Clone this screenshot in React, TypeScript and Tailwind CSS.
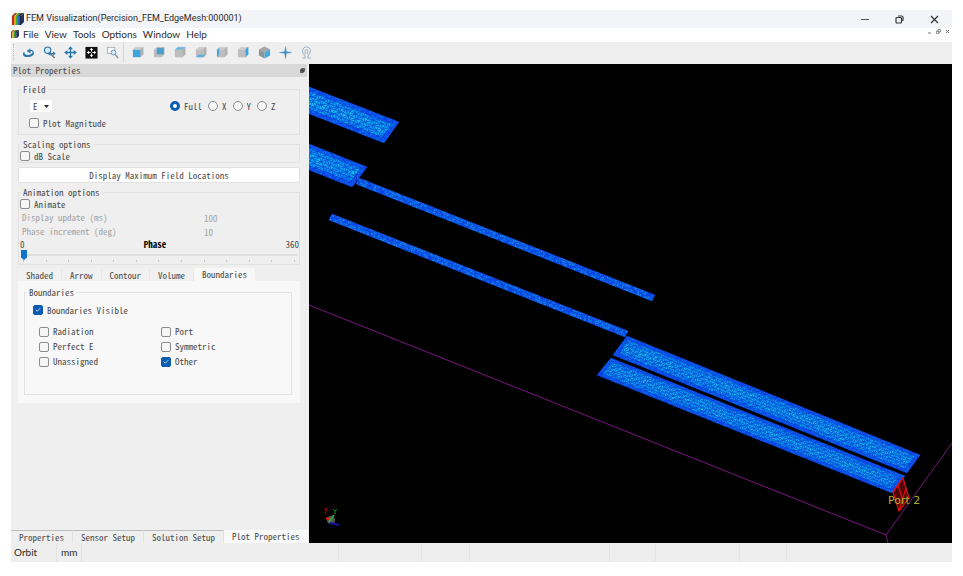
import { useState } from 'react';
import type { ReactNode } from 'react';
import { Check } from 'lucide-react';

type Point = [number, number];

interface Strip {
  // top-left, top-right, bottom-right, bottom-left
  corners: [Point, Point, Point, Point];
  cols: number;
  rows: number;
}

const STRIPS: Strip[] = [
  { corners: [[-15, 17], [90, 58], [75, 79], [-30, 38]], cols: 24, rows: 6 },
  { corners: [[-15, 74], [58, 103], [43, 123], [-30, 94]], cols: 17, rows: 6 },
  { corners: [[50, 114], [346, 231], [343, 237], [47, 120]], cols: 90, rows: 2 },
  { corners: [[23, 150], [319, 267], [316, 273], [20, 156]], cols: 90, rows: 2 },
  { corners: [[318, 272], [611, 391], [598, 409], [304, 291]], cols: 80, rows: 7 },
  { corners: [[302, 294], [596, 412], [583, 429], [288, 311]], cols: 80, rows: 7 },
];

const WIDE_SHADES = ['#0a6cf4', '#0a82f4', '#0a98f2', '#0caaf0', '#18bcec'];
const EDGE_SHADES = ['#1248f4', '#0f5cf4', '#0c6af6'];
const THIN_SHADES = ['#1248f4', '#0c6cf6', '#1a8af4'];

const MENUS = ['File', 'View', 'Tools', 'Options', 'Window', 'Help'];
const PLOT_TABS = ['Shaded', 'Arrow', 'Contour', 'Volume', 'Boundaries'];
const DOCK_TABS = ['Properties', 'Sensor Setup', 'Solution Setup', 'Plot Properties'];

function noise(seed: number) {
  const v = Math.sin(seed * 12.9898) * 43758.5453;
  return v - Math.floor(v);
}

function buildMesh({ corners, cols, rows }: Strip, seed: number) {
  const [tl, tr, br, bl] = corners;
  const at = (c: number, r: number): Point => {
    const inner = c > 0 && c < cols && r > 0 && r < rows;
    const id = seed * 5000 + r * 131 + c;
    const u = (c + (inner ? (noise(id) - 0.5) * 0.35 : 0)) / cols;
    const v = (r + (inner ? (noise(id + 77) - 0.5) * 0.3 : 0)) / rows;
    const x = (1 - v) * (tl[0] + (tr[0] - tl[0]) * u) + v * (bl[0] + (br[0] - bl[0]) * u);
    const y = (1 - v) * (tl[1] + (tr[1] - tl[1]) * u) + v * (bl[1] + (br[1] - bl[1]) * u);
    return [Number(x.toFixed(2)), Number(y.toFixed(2))];
  };
  const cells: { points: string; fill: string }[] = [];
  for (let r = 0; r < rows; r++) {
    for (let c = 0; c < cols; c++) {
      const a = at(c, r);
      const b = at(c + 1, r);
      const d = at(c + 1, r + 1);
      const e = at(c, r + 1);
      const tris = (r + c) % 2 ? [[a, b, d], [a, d, e]] : [[a, b, e], [b, d, e]];
      const edge = r === 0 || r === rows - 1 || c === 0 || c === cols - 1;
      tris.forEach((tri, i) => {
        const n = noise(seed + r * 313 + c * 17 + i * 7);
        const shades = rows === 2 ? THIN_SHADES : edge ? EDGE_SHADES : WIDE_SHADES;
        const near = edge ? 0.2 : 1 - Math.abs((r + 0.5) / rows - 0.5) * 2;
        const idx = Math.min(shades.length - 1, Math.floor(n * 2.4 + near * 3));
        cells.push({ points: tri.map((p) => p.join(',')).join(' '), fill: shades[idx] });
      });
    }
  }
  return cells;
}

const MESHES = STRIPS.map((s, i) => buildMesh(s, i + 1));

function AppLogo({ className }: { className: string }) {
  return (
    <svg className={className} viewBox="0 0 12 12">
      <path d="M1 3 4 0H12L9 3Z" fill="#3a3a3a" />
      <path d="M9 3 12 0V9L9 12Z" fill="#24315f" />
      <path d="M0 3H2V12H0Z" fill="#c0282a" />
      <path d="M2 3H4V12H2Z" fill="#e8a01c" />
      <path d="M4 3H6V12H4Z" fill="#3fa535" />
      <path d="M6 3H8V12H6Z" fill="#2a62c4" />
      <path d="M8 3H9V12H8Z" fill="#17203f" />
      <path d="M0 3 3 0H5L2 3Z" fill="#a3242a" />
      <path d="M2 3 5 0H7L4 3Z" fill="#e8c31c" />
      <path d="M4 3 7 0H9L6 3Z" fill="#3fa56a" />
    </svg>
  );
}

const GREY = '#bdbdbd';
const BLUE = '#3fa3dc';

function Cube({ front = GREY, top = '#cbcbcb', right = '#b0b0b0', children }: {
  front?: string;
  top?: string;
  right?: string;
  children?: ReactNode;
}) {
  return (
    <>
      <path d="M1 4 4 1.4H12L9 4Z" fill={top} stroke={top} strokeWidth=".6" strokeLinejoin="round" />
      <path d="M9 4 12 1.4V9L9 12Z" fill={right} stroke={right} strokeWidth=".6" strokeLinejoin="round" />
      <rect x="1" y="4" width="8" height="8" rx=".6" fill={front} />
      {children}
    </>
  );
}

const TOOLS: { name: string; art: ReactNode }[] = [
  {
    name: 'Rotate',
    art: (
      <g fill="none" stroke="#2b78ad" strokeLinecap="round">
        <path d="M2 7.200C.8 9.800 3.200 11.200 6.500 11c4-.2 6.300-2.400 5.500-4.600C11.400 4.900 9 4.600 7 5.400" strokeWidth="1.400" />
        <path d="M2.200 9C3.800 11.600 9.500 11.400 11.600 8.600" strokeWidth="2.200" />
        <path d="M8.400 3.200 5.400 5.600 8.800 7.200Z" fill="#2b78ad" strokeWidth=".6" />
      </g>
    ),
  },
  {
    name: 'Zoom',
    art: (
      <g fill="none" stroke="#2b78ad">
        <circle cx="5" cy="4.500" r="3.400" fill="#d5eaf6" strokeWidth="1.200" />
        <path d="M8.600 8.800 12.500 13" stroke="#777" strokeWidth="1.600" />
        <path d="M5.500 8.200H13" strokeWidth="1.300" />
        <path d="M8 5.600 5 8.200 8 10.800ZM10.800 6 13.600 8.200 10.800 10.400Z" fill="#2b78ad" stroke="none" />
      </g>
    ),
  },
  {
    name: 'Pan',
    art: (
      <g fill="#2676ad">
        <path d="M6.300 2h1.400v10H6.300ZM2 6.300h10v1.400H2Z" />
        <path d="M7 .2 9.600 3.600H4.400ZM7 13.800 9.600 10.400H4.400ZM.2 7 3.600 4.400V9.600ZM13.800 7 10.400 4.400V9.600Z" />
      </g>
    ),
  },
  {
    name: 'Fit all',
    art: (
      <>
        <rect x=".5" y="1" width="13" height="12.500" fill="#101010" />
        <path d="M7 3V6M7 8V11M3 7H6M8 7H11" stroke="#fff" strokeWidth="1.200" />
        <path d="M7 2 8.800 4.200H5.200ZM7 12 8.800 9.800H5.200ZM2 7 4.200 5.200V8.800ZM12 7 9.800 5.200V8.800Z" fill="#fff" />
      </>
    ),
  },
  {
    name: 'Zoom area',
    art: (
      <g fill="none">
        <rect x="1.500" y="1.500" width="8" height="6.500" fill="#fafafa" stroke="#b0b0b0" />
        <circle cx="8" cy="7" r="2.600" fill="#d5eaf6" stroke="#5b9cc6" />
        <path d="M9.800 9 13 13" stroke="#888" strokeWidth="1.400" />
      </g>
    ),
  },
  { name: 'Front view', art: <Cube front={BLUE} /> },
  {
    name: 'Back view',
    art: <Cube><rect x="4" y="2" width="7.500" height="7" rx=".6" fill="#4b9fcf" /></Cube>,
  },
  { name: 'Top view', art: <Cube top="#67b7e3" /> },
  {
    name: 'Bottom view',
    art: <Cube><path d="M1 12 3.500 9.500H11L9 12Z" fill="#5ab0e0" /></Cube>,
  },
  {
    name: 'Left view',
    art: <Cube><path d="M1 4 3.400 2V9.500L1 12Z" fill="#4ba8dc" /></Cube>,
  },
  { name: 'Right view', art: <Cube right={BLUE} /> },
  {
    name: 'Isometric view',
    art: (
      <>
        <path d="M7 .5 13 3.600 7 6.700 1 3.600Z" fill="#a6a6a6" />
        <path d="M1 3.600 7 6.700V13.500L1 10.200Z" fill="#8f9499" />
        <path d="M13 3.600 7 6.700V13.500L13 10.200Z" fill="#4ba8dc" />
      </>
    ),
  },
  {
    name: 'Origin',
    art: <path d="M7 .5 7.900 6.100 13.500 7 7.900 7.900 7 13.500 6.100 7.900.5 7 6.100 6.100Z" fill="#3d8fc0" stroke="#3d8fc0" strokeWidth=".5" />,
  },
  {
    name: 'Snap',
    art: (
      <path
        d="M2.500 13H5.500V10.500C2 8.500 1.500 1 7 1S12 8.500 8.500 10.500V13H11.500M5.600 9V5.200C5.600 3.400 8.400 3.400 8.400 5.200V9"
        fill="none"
        stroke="#8fabc0"
        strokeWidth="1"
      />
    ),
  },
];

function TickBox({ label, defaultChecked = false, className = '' }: {
  label: string;
  defaultChecked?: boolean;
  className?: string;
}) {
  return (
    <label className={`flex items-center gap-1 ${className}`}>
      <span className="relative flex">
        <input
          type="checkbox"
          defaultChecked={defaultChecked}
          className="peer size-[10px] appearance-none rounded-[2px] border border-[#8c8c8c] bg-[#f6f6f6] checked:border-[#0a5cb0] checked:bg-[#0a5cb0]"
        />
        <Check className="pointer-events-none absolute inset-0 m-auto hidden size-[6px] text-white peer-checked:block" strokeWidth={3} />
      </span>
      {label}
    </label>
  );
}

function Group({ title, className, children }: { title: string; className: string; children: ReactNode }) {
  return (
    <fieldset className={`min-w-0 border border-[#e2e2e2] ${className}`}>
      <legend className="ml-[2px] h-[11px] px-[2px]">{title}</legend>
      {children}
    </fieldset>
  );
}

function FieldGroup() {
  return (
    <Group title="Field" className="mt-[7px] pb-[5px]">
      <div className="flex h-[22px] items-center pl-[11px]">
        <span className="relative flex">
          <select aria-label="Field" className="h-3 w-[22px] appearance-none rounded-[2px] bg-white pl-[3px]">
            <option>E</option>
            <option>H</option>
          </select>
          <svg className="pointer-events-none absolute top-[5px] right-[3px] h-[3px] w-[5px]" viewBox="0 0 5 3">
            <path d="M0 0H5L2.500 3Z" fill="#222" />
          </svg>
        </span>
        <div className="ml-[118px] flex gap-[6px]">
          {['Full', 'X', 'Y', 'Z'].map((name) => (
            <label key={name} className="flex items-center gap-1">
              <input
                type="radio"
                name="component"
                defaultChecked={name === 'Full'}
                className="size-[10px] appearance-none rounded-full border border-[#8c8c8c] bg-[#f6f6f6] checked:border-3 checked:border-[#0a5cb0] checked:bg-white"
              />
              {name}
            </label>
          ))}
        </div>
      </div>
      <TickBox label="Plot Magnitude" className="h-3 pl-[10px]" />
    </Group>
  );
}

function AnimationGroup() {
  const [phase, setPhase] = useState(0);

  return (
    <Group title="Animation options" className="mt-1 pb-[2px]">
      <TickBox label="Animate" className="h-3 pl-px" />
      <div className="mt-px grid grid-cols-[182px_1fr] pl-[3px] text-[#a3a3a3]">
        <label htmlFor="update" className="h-[14px] leading-[14px]">Display update (ms)</label>
        <input id="update" disabled defaultValue="100" className="mr-2 h-[14px] min-w-0" />
        <label htmlFor="increment" className="h-[14px] leading-[14px]">Phase increment (deg)</label>
        <input id="increment" disabled defaultValue="10" className="mr-2 h-[14px] min-w-0" />
      </div>
      <div className="flex justify-between pl-px">
        <span>0</span>
        <label htmlFor="phase" className="font-bold text-black">Phase</label>
        <span>360</span>
      </div>
      <input
        id="phase"
        type="range"
        min={0}
        max={360}
        value={phase}
        onChange={(e) => setPhase(Number(e.target.value))}
        className="mx-[2px] block h-[10px] w-[calc(100%-4px)] appearance-none bg-transparent [&::-webkit-slider-runnable-track]:h-[2px] [&::-webkit-slider-runnable-track]:bg-[#dedede] [&::-webkit-slider-thumb]:-mt-1 [&::-webkit-slider-thumb]:h-[10px] [&::-webkit-slider-thumb]:w-[6px] [&::-webkit-slider-thumb]:appearance-none [&::-webkit-slider-thumb]:bg-[#1173c7] [&::-webkit-slider-thumb]:[clip-path:polygon(0_0,100%_0,100%_75%,50%_100%,0_75%)]"
      />
      <div className="flex justify-between px-1">
        {Array.from({ length: 13 }, (_, i) => (
          <span key={i} className="h-[2px] w-px bg-[#c6c6c6]" />
        ))}
      </div>
    </Group>
  );
}

function BoundariesPane() {
  return (
    <div className="bg-[#f8f8f8] pt-[6px] pr-2 pb-2 pl-[6px]">
      <Group title="Boundaries" className="pb-[25px]">
        <TickBox label="Boundaries Visible" defaultChecked className="mt-[6px] h-3 pl-2" />
        <div className="mt-2 grid grid-cols-[122px_1fr] pl-[14px]">
          <TickBox label="Radiation" className="h-[15px]" />
          <TickBox label="Port" className="h-[15px]" />
          <TickBox label="Perfect E" className="h-[15px]" />
          <TickBox label="Symmetric" className="h-[15px]" />
          <TickBox label="Unassigned" className="h-[15px]" />
          <TickBox label="Other" defaultChecked className="h-[15px]" />
        </div>
      </Group>
    </div>
  );
}

function PlotPanel() {
  const [tab, setTab] = useState('Boundaries');
  const [dock, setDock] = useState('Plot Properties');

  return (
    <aside className="flex w-[298px] shrink-0 flex-col bg-[#efefef] font-['Noto_Sans_Mono_CJK_SC','Liberation_Mono',monospace] text-[9px] leading-[11px] text-[#4a4a4a]">
      <header className="mr-[2px] flex h-[13px] items-center justify-between bg-[#d8d8d8] px-[2px]">
        <h2>Plot Properties</h2>
        <button type="button" aria-label="Float panel">
          <svg className="size-[5px]" viewBox="0 0 6 6">
            <path d="M2 .5H5.500V4H2ZM.5 2H4V5.500H.5Z" fill="#777" stroke="#333" strokeWidth=".8" />
          </svg>
        </button>
      </header>

      <div className="flex-1 pr-[9px] pl-[7px]">
        <FieldGroup />
        <Group title="Scaling options" className="mt-1">
          <TickBox label="dB Scale" className="h-3 pl-px" />
        </Group>
        <button type="button" className="mt-1 block h-4 w-full rounded-[2px] border border-[#e2e2e2] bg-white">
          Display Maximum Field Locations
        </button>
        <AnimationGroup />

        <div className="mt-[3px] flex items-end" role="tablist">
          {PLOT_TABS.map((name) => (
            <button
              key={name}
              type="button"
              role="tab"
              aria-selected={tab === name}
              onClick={() => setTab(name)}
              className={tab === name ? 'h-[13px] bg-[#f8f8f8] px-2' : 'h-3 border-r border-[#e6e6e6] bg-[#f1f1f1] px-2'}
            >
              {name}
            </button>
          ))}
        </div>
        <BoundariesPane />
      </div>

      <div className="flex" role="tablist">
        {DOCK_TABS.map((name) => (
          <button
            key={name}
            type="button"
            role="tab"
            aria-selected={dock === name}
            onClick={() => setDock(name)}
            className={
              dock === name
                ? 'h-[13px] bg-[#f9f9f9] px-2 whitespace-nowrap'
                : 'h-[13px] border-t border-r border-t-[#bdbdbd] border-r-[#e2e2e2] px-2 whitespace-nowrap'
            }
          >
            {name}
          </button>
        ))}
      </div>
    </aside>
  );
}

function Viewport() {
  return (
    <svg className="min-w-0 flex-1 bg-black" viewBox="0 0 643 479" preserveAspectRatio="xMinYMin slice">
      <g fill="none" stroke="#7a1480" strokeWidth="1">
        <path d="M0 241 577 471 643 379" />
        <path d="M577 471 579 479" />
      </g>
      {MESHES.map((cells, i) => (
        <g key={i} stroke="#0a44e8" strokeWidth=".4" strokeLinejoin="round">
          {cells.map((cell, j) => (
            <polygon key={j} points={cell.points} fill={cell.fill} />
          ))}
        </g>
      ))}
      <g fill="none" stroke="#e01010" strokeWidth="1.200">
        <path d="M594 414 584 428 590 447 600 434Z" fill="#500404" />
        <path d="M584 428 594 414M589 421 595 440M590 447 597 424" />
      </g>
      <text x="579" y="440" fill="#b4b032" className="font-['DejaVu_Sans',sans-serif] text-[11px]">Port 2</text>
      <g fill="none" strokeWidth="1">
        <circle cx="22" cy="456" r="4" fill="#555" />
        <path d="M22 456 17 454" stroke="#e01818" strokeWidth="2" />
        <path d="M20 458 25 451" stroke="#22b83a" strokeWidth="1.500" />
        <path d="M21 459 30 461" stroke="#1414a0" strokeWidth="2" />
        <path d="M15 445H18L16 450" stroke="#a01010" />
        <path d="M24 445 26 447 28 445M26 447V450" stroke="#128a22" />
      </g>
    </svg>
  );
}

export default function App() {
  return (
    <div className="flex min-h-screen flex-col bg-white px-[11px] pt-[10px] pb-[14px] font-[Lato,'Open_Sans',sans-serif] text-[10px] text-[#2a2a2a]">
      <header className="flex h-[18px] items-center bg-[#f3f4f7] pl-px">
        <AppLogo className="size-3" />
        <h1 className="ml-[2px] flex-1 font-[Roboto,sans-serif] text-[9px]">FEM Visualization(Percision_FEM_EdgeMesh:000001)</h1>
        <div className="flex items-center gap-[26px] pr-[13px]">
          <button type="button" aria-label="Minimize">
            <svg className="size-[9px]" viewBox="0 0 9 9"><path d="M1 4.500H9" stroke="#555" /></svg>
          </button>
          <button type="button" aria-label="Restore">
            <svg className="size-[9px]" viewBox="0 0 9 9" fill="none" stroke="#333" strokeWidth="1.200">
              <rect x="1" y="2.500" width="5.500" height="5.500" rx="1" />
              <path d="M3 1H6.500Q8 1 8 2.500V6" />
            </svg>
          </button>
          <button type="button" aria-label="Close">
            <svg className="size-[9px]" viewBox="0 0 9 9"><path d="M1 1 8 8M8 1 1 8" stroke="#333" strokeWidth="1.200" /></svg>
          </button>
        </div>
      </header>

      <nav className="flex h-[14px] items-center bg-white pb-[2px]">
        <AppLogo className="size-2" />
        <div className="ml-1 flex flex-1 gap-[6px]">
          {MENUS.map((name) => (
            <button key={name} type="button">{name}</button>
          ))}
        </div>
        <div className="flex gap-1 self-start pr-[2px] pt-px">
          <button type="button" aria-label="Minimize document">
            <svg className="size-[5px]" viewBox="0 0 5 5"><path d="M1 4H4" stroke="#777" /></svg>
          </button>
          <button type="button" aria-label="Restore document">
            <svg className="size-[5px]" viewBox="0 0 5 5"><path d="M2 .5H4.500V3H2ZM.5 2H3V4.500H.5Z" fill="none" stroke="#777" strokeWidth=".8" /></svg>
          </button>
          <button type="button" aria-label="Close document">
            <svg className="size-[5px]" viewBox="0 0 5 5"><path d="M1 1 4 4M4 1 1 4" stroke="#666" /></svg>
          </button>
        </div>
      </nav>

      <div className="flex h-[22px] items-center bg-[#efefef] pb-[2px] pl-[2px]">
        <span className="mr-1 h-4 border-l border-dotted border-[#bbb]" />
        {TOOLS.map((tool, i) => (
          <button
            key={tool.name}
            type="button"
            aria-label={tool.name}
            className={`flex h-5 items-center justify-center ${i === 5 ? 'w-[26px] border-l border-[#d4d4d4] pl-1' : 'w-[21px]'}`}
          >
            <svg className="size-[13px]" viewBox="0 0 14 14">{tool.art}</svg>
          </button>
        ))}
      </div>

      <main className="flex flex-1">
        <PlotPanel />
        <Viewport />
      </main>

      <footer className="flex h-[19px] items-stretch bg-[#eeeeee] pl-[3px] leading-[19px]">
        <span className="w-[43px] border-r border-[#e2e2e2]">Orbit</span>
        <span className="w-[25px] border-r border-[#e2e2e2] pl-1">mm</span>
        <span className="flex-[258] border-r border-[#e4e4e4]" />
        <span className="flex-[83] border-r border-[#e4e4e4]" />
        <span className="flex-[47] border-r border-[#e4e4e4]" />
        <span className="flex-[140] border-r border-[#e4e4e4]" />
        <span className="flex-[46] border-r border-[#e4e4e4]" />
        <span className="flex-[83] border-r border-[#e4e4e4]" />
        <span className="flex-[47] border-r border-[#e4e4e4]" />
        <span className="flex-[166]" />
      </footer>
    </div>
  );
}
